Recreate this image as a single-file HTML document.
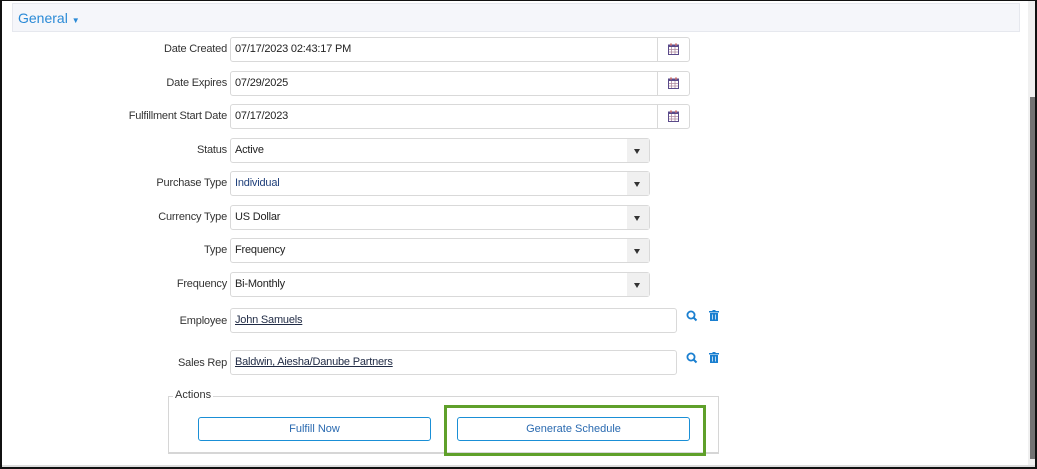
<!DOCTYPE html>
<html><head><meta charset="utf-8"><style>
*{box-sizing:border-box;margin:0;padding:0}
body{width:1037px;height:469px;background:#fff;position:relative;overflow:hidden;font-family:"Liberation Sans",sans-serif;font-size:11px;color:#333}
.frame{position:absolute;left:0;top:0;width:1037px;height:469px;border:2px solid #111;border-top-width:1px}
.a{position:absolute}
.hdr{left:12px;top:3px;width:1008px;height:29px;background:#f5f6fa;border:1px solid #e6e8ee}
.hdr span{position:absolute;left:5px;top:6px;font-size:14px;color:#2a8ad6}
.lbl{text-align:right;width:200px;left:27px;color:#333;letter-spacing:-0.2px}
.inp{left:230px;height:25px;border:1px solid #d9d9d9;border-radius:3px;background:#fff;padding:0 4px;line-height:22px;color:#222;letter-spacing:-0.2px}
.cal{position:absolute;right:0;top:0;width:32px;height:23px;border-left:1px solid #d9d9d9}
.arr{position:absolute;right:0;top:0;width:22px;height:23px;background:#f0f0f0}
.arr:after{content:"";position:absolute;left:7px;top:10px;border:3.5px solid transparent;border-top:5px solid #333;border-bottom:0}
.lnk{text-decoration:underline;color:#1f2a44}
.btn{height:24px;border:1px solid #1a8fd6;border-radius:3px;text-align:center;line-height:22px;color:#2a6ab0;font-size:11px}
</style></head><body>
<div class="a hdr"><span>General <span style="position:static;font-size:8px">▼</span></span></div>

<div class="a lbl" style="top:43px">Date Created</div>
<div class="a inp" style="top:37px;width:460px">07/17/2023 02:43:17 PM<div class="cal"><svg class="a" style="left:10px;top:5px" width="11" height="12" viewBox="0 0 11 12"><rect x="0.5" y="2" width="10" height="9.5" fill="#fff" stroke="#5a4a8a"/><rect x="0.5" y="2" width="10" height="2" fill="#5a4a8a"/><path d="M3.5 4v7M7 4v7M1 6.5h9M1 9h9" stroke="#b08aa0" stroke-width=".8"/><rect x="2" y="0.5" width="2" height="2" fill="#c77"/><rect x="7" y="0.5" width="2" height="2" fill="#c77"/></svg></div></div>
<div class="a lbl" style="top:77px">Date Expires</div>
<div class="a inp" style="top:71px;width:460px">07/29/2025<div class="cal"><svg class="a" style="left:10px;top:5px" width="11" height="12" viewBox="0 0 11 12"><rect x="0.5" y="2" width="10" height="9.5" fill="#fff" stroke="#5a4a8a"/><rect x="0.5" y="2" width="10" height="2" fill="#5a4a8a"/><path d="M3.5 4v7M7 4v7M1 6.5h9M1 9h9" stroke="#b08aa0" stroke-width=".8"/><rect x="2" y="0.5" width="2" height="2" fill="#c77"/><rect x="7" y="0.5" width="2" height="2" fill="#c77"/></svg></div></div>
<div class="a lbl" style="top:110px">Fulfillment Start Date</div>
<div class="a inp" style="top:104px;width:460px">07/17/2023<div class="cal"><svg class="a" style="left:10px;top:5px" width="11" height="12" viewBox="0 0 11 12"><rect x="0.5" y="2" width="10" height="9.5" fill="#fff" stroke="#5a4a8a"/><rect x="0.5" y="2" width="10" height="2" fill="#5a4a8a"/><path d="M3.5 4v7M7 4v7M1 6.5h9M1 9h9" stroke="#b08aa0" stroke-width=".8"/><rect x="2" y="0.5" width="2" height="2" fill="#c77"/><rect x="7" y="0.5" width="2" height="2" fill="#c77"/></svg></div></div>

<div class="a lbl" style="top:144px">Status</div>
<div class="a inp" style="top:138px;width:420px">Active<div class="arr"></div></div>
<div class="a lbl" style="top:177px">Purchase Type</div>
<div class="a inp" style="top:171px;width:420px;color:#1f3f7a">Individual<div class="arr"></div></div>
<div class="a lbl" style="top:211px">Currency Type</div>
<div class="a inp" style="top:205px;width:420px">US Dollar<div class="arr"></div></div>
<div class="a lbl" style="top:244px">Type</div>
<div class="a inp" style="top:238px;width:420px">Frequency<div class="arr"></div></div>
<div class="a lbl" style="top:278px">Frequency</div>
<div class="a inp" style="top:272px;width:420px">Bi-Monthly<div class="arr"></div></div>

<div class="a lbl" style="top:315px">Employee</div>
<div class="a inp" style="top:308px;width:447px"><span class="lnk">John Samuels</span></div>
<div class="a lbl" style="top:357px">Sales Rep</div>
<div class="a inp" style="top:350px;width:447px"><span class="lnk">Baldwin, Aiesha/Danube Partners</span></div>

<svg class="a" style="left:686px;top:310px" width="12" height="12" viewBox="0 0 12 12"><circle cx="5" cy="5" r="3.6" fill="none" stroke="#1a7fd0" stroke-width="1.8"/><path d="M7.5 7.5l3 3" stroke="#1a7fd0" stroke-width="2"/></svg>
<svg class="a" style="left:709px;top:310px" width="10" height="11" viewBox="0 0 10 11"><rect x="0" y="1" width="10" height="1.5" fill="#1a7fd0"/><rect x="3.5" y="0" width="3" height="1.5" fill="#1a7fd0"/><rect x="1" y="3" width="8" height="8" fill="#1a7fd0"/><path d="M3.5 4.5v5M6.5 4.5v5" stroke="#fff" stroke-width=".7"/></svg>
<svg class="a" style="left:686px;top:352px" width="12" height="12" viewBox="0 0 12 12"><circle cx="5" cy="5" r="3.6" fill="none" stroke="#1a7fd0" stroke-width="1.8"/><path d="M7.5 7.5l3 3" stroke="#1a7fd0" stroke-width="2"/></svg>
<svg class="a" style="left:709px;top:352px" width="10" height="11" viewBox="0 0 10 11"><rect x="0" y="1" width="10" height="1.5" fill="#1a7fd0"/><rect x="3.5" y="0" width="3" height="1.5" fill="#1a7fd0"/><rect x="1" y="3" width="8" height="8" fill="#1a7fd0"/><path d="M3.5 4.5v5M6.5 4.5v5" stroke="#fff" stroke-width=".7"/></svg>

<div class="a" style="left:168px;top:396px;width:551px;height:58px;border:1px solid #d6d6d6;border-bottom-width:2px"></div>
<div class="a" style="left:173px;top:389px;background:#fff;padding:0 2px;font-size:11px;color:#333">Actions</div>
<div class="a btn" style="left:198px;top:417px;width:233px">Fulfill Now</div>
<div class="a" style="left:444px;top:405px;width:262px;height:51px;border:3px solid #5fa02a"></div>
<div class="a btn" style="left:457px;top:417px;width:233px">Generate Schedule</div>

<div class="a" style="left:2px;top:465px;width:1033px;height:2px;background:#ddd"></div>
<div class="a" style="left:1028px;top:1px;width:7px;height:464px;background:#f0f0f0"></div>
<div class="a" style="left:1030px;top:97px;width:5px;height:362px;background:#737373"></div>
<div class="frame"></div>
</body></html>
